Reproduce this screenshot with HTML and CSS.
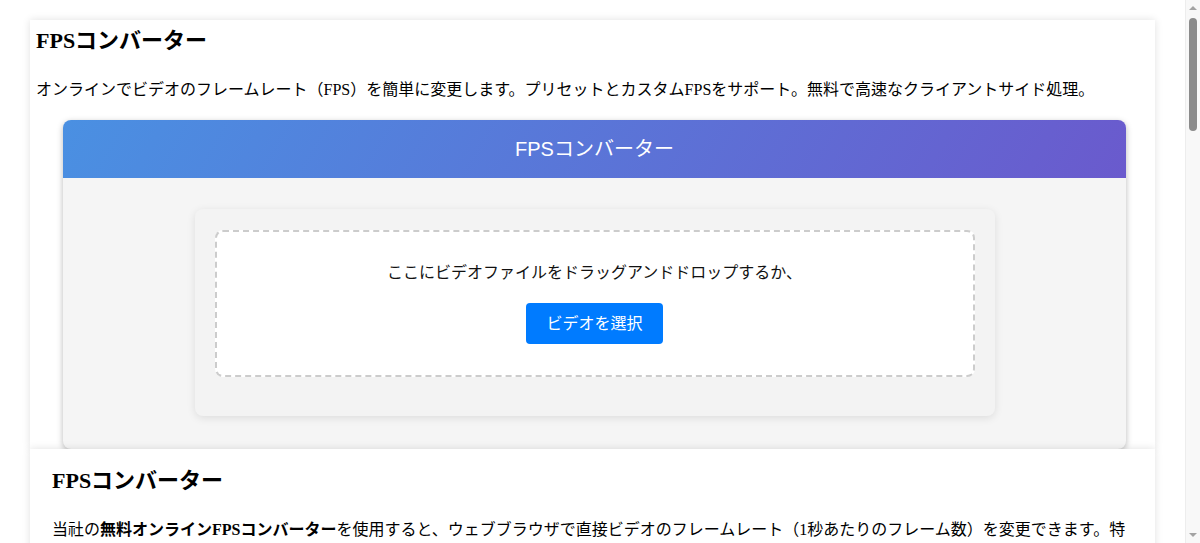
FILE: index.html
```html
<!DOCTYPE html>
<html>
<head>
<meta charset="utf-8">
<title>FPSコンバーター</title>
<link rel="stylesheet" href="styles.css">
</head>
<body>
<div class="page">
  <section class="card intro">
    <h2 class="title">FPSコンバーター</h2>
    <p class="lead">オンラインでビデオのフレームレート（FPS）を簡単に変更します。プリセットとカスタムFPSをサポート。無料で高速なクライアントサイド処理。</p>
    <div class="tool">
      <div class="tool-header">FPSコンバーター</div>
      <div class="tool-body">
        <div class="panel">
          <div class="drop">
            <p class="drop-text">ここにビデオファイルをドラッグアンドドロップするか、</p>
            <button class="btn" type="button">ビデオを選択</button>
          </div>
        </div>
      </div>
    </div>
  </section>
  <section class="card article">
    <h2 class="title">FPSコンバーター</h2>
    <p>当社の<strong>無料オンラインFPSコンバーター</strong>を使用すると、ウェブブラウザで直接ビデオのフレームレート（1秒あたりのフレーム数）を変更できます。特に、ビデオ編集、ソーシャルメディアへのアップロード、さまざまなデバイスとの互換性の確保に便利です。</p>
    <p>ファイルはサーバーにアップロードされず、すべての処理はお使いのデバイス上で行われるため、プライバシーが守られます。</p>
    <h3>使い方</h3>
    <p>ビデオファイルを選択し、目的のFPSを選んで変換ボタンをクリックするだけです。</p>
  </section>
</div>
<div class="scrollbar" aria-hidden="true">
  <span class="sb-arrow sb-up"></span>
  <span class="sb-thumb"></span>
  <span class="sb-arrow sb-down"></span>
</div>
</body>
</html>
```

FILE: styles.css
```css
html, body {
  margin: 0;
  padding: 0;
  background: #ffffff;
}

body {
  font-family: "Liberation Serif", "Noto Sans CJK KR", serif;
  font-size: 16px;
  color: #000;
}

.page {
  padding: 20px 45px 20px 30px;
}

.card {
  background: #fff;
  box-shadow: 0 0 8px rgba(0, 0, 0, 0.12);
}

.intro {
  padding: 2px 6px 0;
}

.article {
  padding: 13px 22px 20px;
}

.title {
  font-size: 22px;
  font-weight: bold;
  margin: 0 0 22px;
}

p {
  margin: 0 0 16px;
}

.lead {
  margin-bottom: 20px;
}

.tool {
  margin: 0 23px 0 27px;
  border-radius: 8px;
  overflow: hidden;
  background: #f5f5f5;
  box-shadow: 0 2px 6px rgba(0, 0, 0, 0.28);
  font-family: "Liberation Sans", "Noto Sans CJK KR", sans-serif;
}

.tool-header {
  background: linear-gradient(120deg, #4a90e2 0%, #6a5acd 100%);
  color: #fff;
  text-align: center;
  font-size: 20px;
  line-height: 28px;
  padding: 15px 0;
}

.tool-body {
  padding: 31px 0 33px;
}

.panel {
  width: 800px;
  margin: 0 auto;
  box-sizing: border-box;
  padding: 21px 20px 39px;
  background: #f3f3f3;
  border-radius: 8px;
  box-shadow: 0 2px 8px rgba(0, 0, 0, 0.1);
}

.drop {
  border: 2px dashed #cccccc;
  border-radius: 8px;
  background: #fff;
  padding: 31px 20px;
  text-align: center;
}

.drop-text {
  margin: 0 0 20px;
  line-height: 20px;
  font-size: 16px;
  color: #111;
}

.btn {
  font-family: "Liberation Sans", "Noto Sans CJK KR", sans-serif;
  font-size: 16px;
  line-height: 21px;
  padding: 10px 20px;
  border: none;
  border-radius: 4px;
  background: #007bff;
  color: #fff;
  cursor: pointer;
}

h3 {
  font-size: 19px;
  margin: 20px 0 12px;
}

/* classic browser scrollbar drawn over the right edge */
.scrollbar {
  position: fixed;
  top: 0;
  right: 0;
  bottom: 0;
  width: 15px;
  background: #f8f8f8;
  border-left: 1px solid #ededed;
  box-sizing: border-box;
}

.sb-thumb {
  position: absolute;
  top: 18px;
  left: 3px;
  width: 8px;
  height: 113px;
  border-radius: 4px;
  background: #8b8b8b;
}

.sb-arrow {
  position: absolute;
  left: 3px;
  width: 0;
  height: 0;
  border-left: 4px solid transparent;
  border-right: 4px solid transparent;
}

.sb-up {
  top: 6px;
  border-bottom: 4px solid #a3a3a3;
}

.sb-down {
  bottom: 6px;
  border-top: 4px solid #a3a3a3;
}
```
